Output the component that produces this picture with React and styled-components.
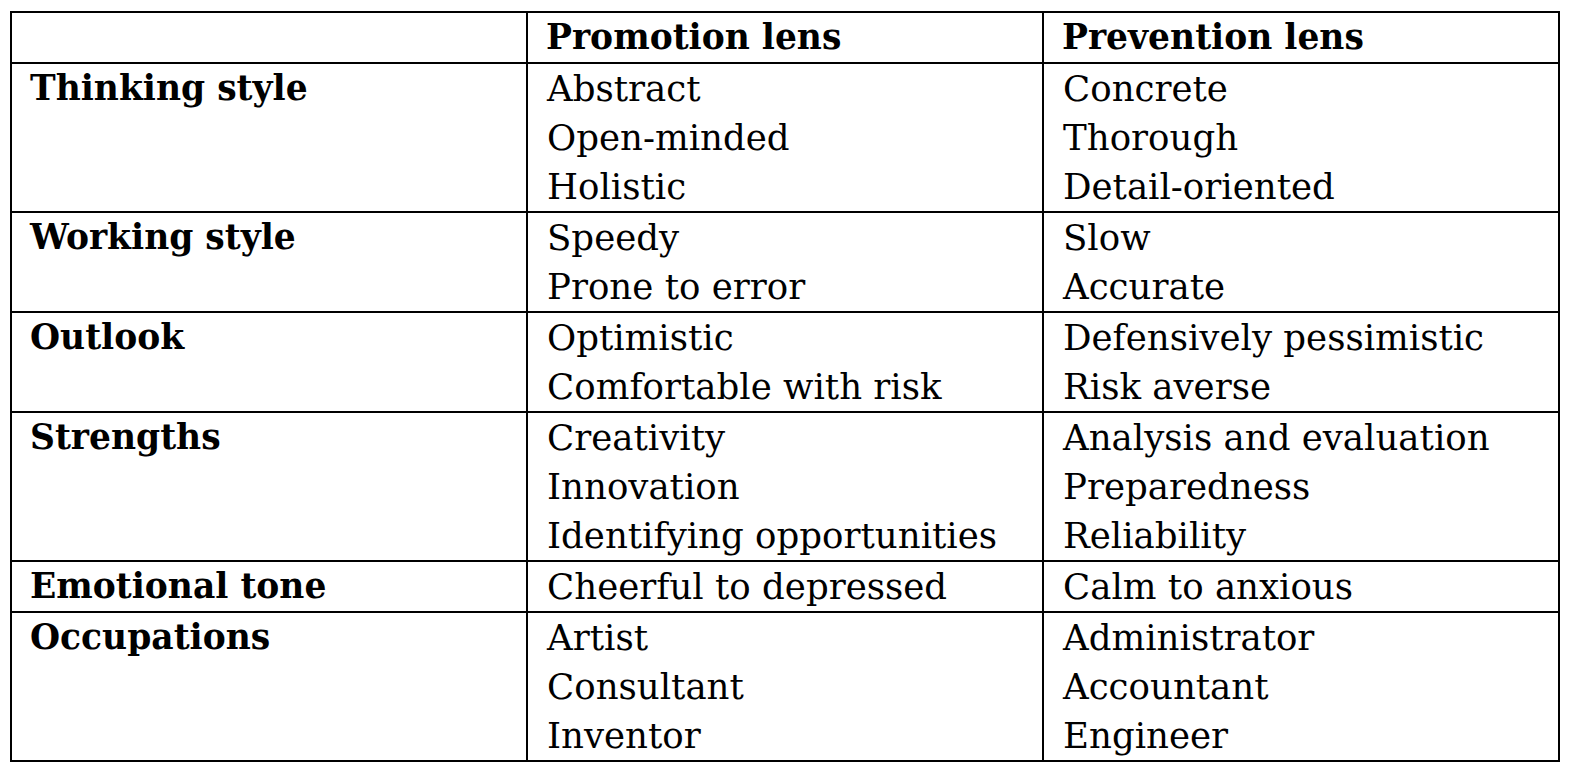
import styled, { createGlobalStyle } from "styled-components";

const rows = [
  {
    label: "Thinking style",
    promotion: ["Abstract", "Open-minded", "Holistic"],
    prevention: ["Concrete", "Thorough", "Detail-oriented"],
  },
  {
    label: "Working style",
    promotion: ["Speedy", "Prone to error"],
    prevention: ["Slow", "Accurate"],
  },
  {
    label: "Outlook",
    promotion: ["Optimistic", "Comfortable with risk"],
    prevention: ["Defensively pessimistic", "Risk averse"],
  },
  {
    label: "Strengths",
    promotion: ["Creativity", "Innovation", "Identifying opportunities"],
    prevention: ["Analysis and evaluation", "Preparedness", "Reliability"],
  },
  {
    label: "Emotional tone",
    promotion: ["Cheerful to depressed"],
    prevention: ["Calm to anxious"],
  },
  {
    label: "Occupations",
    promotion: ["Artist", "Consultant", "Inventor"],
    prevention: ["Administrator", "Accountant", "Engineer"],
  },
];

function App() {
  return (
    <>
      <GlobalStyle />
      <Page>
        <Table>
          <colgroup>
            <Col />
            <Col />
            <Col />
          </colgroup>
          <thead>
            <tr>
              <Cell />
              <Cell bold>Promotion lens</Cell>
              <Cell bold>Prevention lens</Cell>
            </tr>
          </thead>
          <tbody>
            {rows.map((row) => (
              <tr key={row.label}>
                <Cell bold>{row.label}</Cell>
                <Cell>
                  {row.promotion.map((item) => (
                    <Line key={item}>{item}</Line>
                  ))}
                </Cell>
                <Cell>
                  {row.prevention.map((item) => (
                    <Line key={item}>{item}</Line>
                  ))}
                </Cell>
              </tr>
            ))}
          </tbody>
        </Table>
      </Page>
    </>
  );
}

export default App;

const GlobalStyle = createGlobalStyle`
  body {
    margin: 0;
    background: #fff;
  }
`;

const Page = styled.div`
  padding: 11px 0 0 10px;
  font-family: "DejaVu Serif", "Liberation Serif", serif;
  color: #000;
`;

const Table = styled.table`
  border-collapse: collapse;
  table-layout: fixed;
  width: 1548px;
  border: 2px solid #000;
`;

const Col = styled.col`
  width: 516px;
`;

const Cell = styled.td`
  border: 2px solid #000;
  padding: 0 ${(p) => (p.bold ? "18px" : "19px")};
  vertical-align: top;
  font-size: ${(p) => (p.bold ? "34.5px" : "35.6px")};
  line-height: 49px;
  font-weight: ${(p) => (p.bold ? 700 : 400)};
  white-space: nowrap;
`;

const Line = styled.div``;
